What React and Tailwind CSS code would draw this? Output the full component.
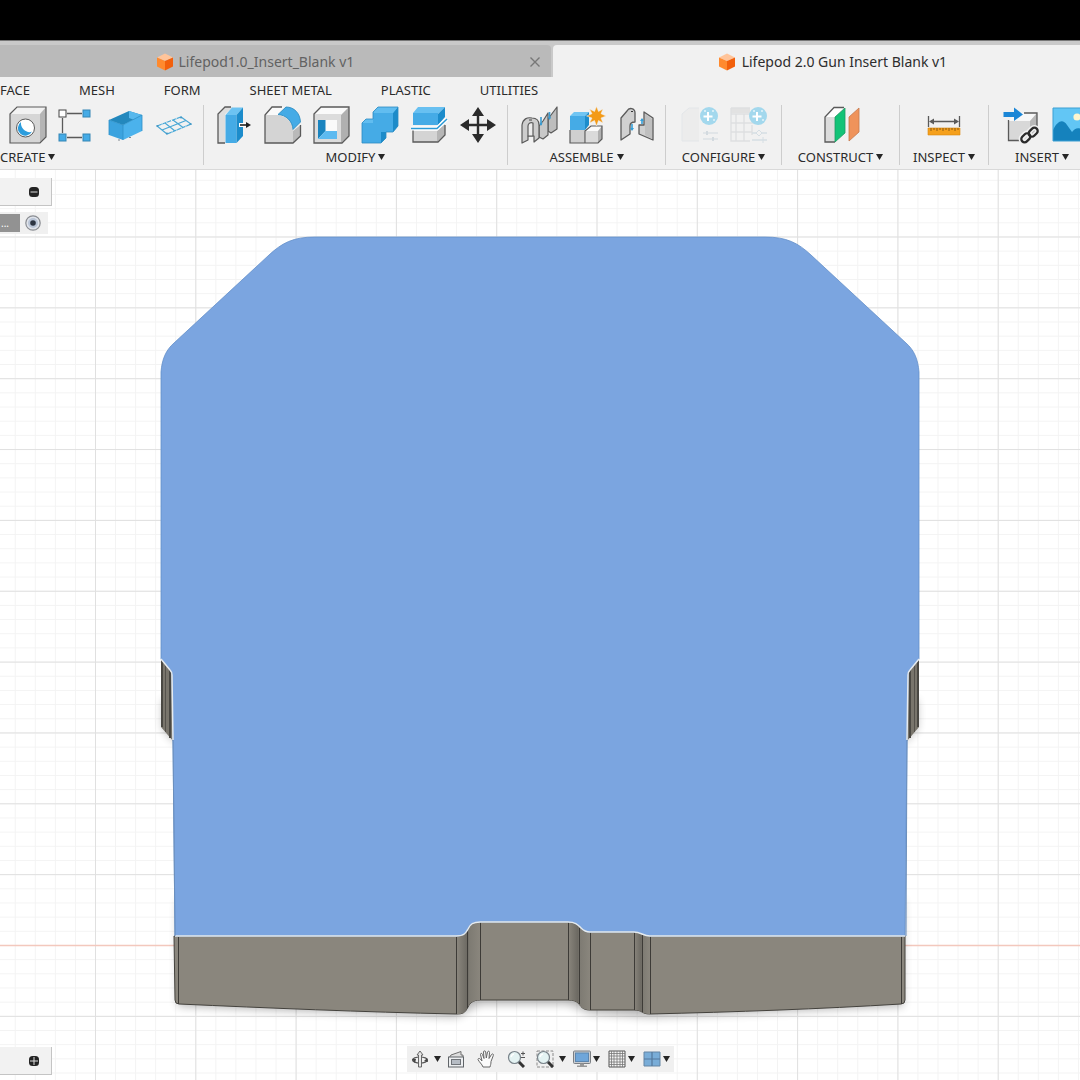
const BLUE = '#45abe6'
const DARK_BLUE = '#1c8ccb'
const LINE = '#5a5a5a'

function Icon({ children, className = 'h-10 w-10', box = '0 0 40 40' }) {
  return (
    <svg viewBox={box} className={`shrink-0 ${className}`} fill="none" aria-hidden="true">
      {children}
    </svg>
  )
}

function Caret() {
  return (
    <svg viewBox="0 0 7 6" className="h-1.5 w-[7px] shrink-0" aria-hidden="true">
      <path d="M0 0H7L3.5 6Z" fill="#262626" />
    </svg>
  )
}

function OrangeCube() {
  return (
    <Icon className="h-[18px] w-[18px]" box="0 0 18 18">
      <path d="M9 .5L17 4.5L9 8L1 4.5Z" fill="#ffc49a" />
      <path d="M1 4.5L9 8V17.500L1 13.500Z" fill="#ff8a2e" />
      <path d="M17 4.5L9 8V17.500L17 13.500Z" fill="#f2600c" />
    </Icon>
  )
}

function HoleIcon() {
  return (
    <Icon>
      <path d="M2 9L9 2H38L32 9Z" fill="#f2f2f2" />
      <path d="M2 9H32V38H2Z" fill="#d6d6d6" />
      <path d="M32 9L38 2V32L32 38Z" fill="#b5b5b5" />
      <path d="M2 9L9 2H38V32L32 38H2Z" stroke={LINE} strokeWidth="1.2" />
      <circle cx="17.500" cy="23" r="9" fill="#fff" stroke={LINE} />
      <path d="M13 17A7.500 7.500 0 1 0 24 26.500C20 29 12 24 13 17Z" fill="#2c9ddd" />
    </Icon>
  )
}

function SketchIcon() {
  return (
    <Icon>
      <path d="M10 8.500H25M10 32.500H25M5.500 13V28" stroke={LINE} strokeWidth="1.300" />
      <rect x="2" y="5" width="7" height="7" fill="#fff" stroke="#444" />
      <rect x="26" y="5" width="7" height="7" fill={BLUE} stroke="#3486b5" />
      <rect x="2" y="29" width="7" height="7" fill={BLUE} stroke="#3486b5" />
      <rect x="26" y="29" width="7" height="7" fill={BLUE} stroke="#3486b5" />
    </Icon>
  )
}

function BoxIcon() {
  return (
    <Icon>
      <path d="M3 15L23 6L36 10L17 20Z" fill="#2388bd" />
      <path d="M23 6V13L31 16L36 10Z" fill="#57b8ed" />
      <path d="M3 15L17 20V35L3 30Z" fill="#3ba3df" />
      <path d="M17 20L36 10V26L17 35Z" fill="#4bb2ec" />
      <path d="M3 15L17 20L36 10M17 20V35M3 15V30M36 10V26" stroke="#2d90c8" strokeWidth=".8" />
      <path d="M13 34.500V35.500M24 32V33" stroke="#123" />
    </Icon>
  )
}

function PatchIcon() {
  return (
    <Icon>
      <path d="M2 21L26 12L36 19L12 29ZM10 18L20 26M18 15L28 22.500M7 25L31 15.500" stroke="#4aa8d6" strokeWidth="1.200" />
      <path d="M2 21L26 12M12 29L36 19" stroke="#fff" strokeWidth="1" strokeDasharray="1 4" />
      <g fill="#3f95c4">
        <circle cx="2.500" cy="21" r="1" />
        <circle cx="26" cy="12.500" r="1" />
        <circle cx="35.500" cy="19" r="1" />
        <circle cx="12" cy="28.500" r="1" />
      </g>
    </Icon>
  )
}

function PressPullIcon() {
  return (
    <Icon>
      <path d="M12 38H5V9L12 2H20L12 9Z" fill="#dedede" />
      <path d="M12 38H5V9L12 2H18" stroke={LINE} strokeWidth="1.300" />
      <path d="M12.500 10L19 2.500H30L23.500 10Z" fill="#6cc3f2" />
      <path d="M12.500 10H23.500V38H12.500Z" fill={BLUE} />
      <path d="M23.500 10L30 2.500V31L23.500 38Z" fill={DARK_BLUE} />
      <path d="M26 20H33" stroke="#fff" strokeWidth="4" />
      <path d="M27 20H34" stroke="#222" strokeWidth="1.600" />
      <path d="M33 17L38 20L33 23Z" fill="#222" />
    </Icon>
  )
}

function FilletIcon() {
  return (
    <Icon>
      <path d="M3 10L10 2H22L16 10Z" fill="#fafafa" />
      <path d="M3 10H16Q29 12 31 25V38H3Z" fill="#d4d4d4" />
      <path d="M31 26L38.500 20V31L31 38Z" fill="#b9b9b9" />
      <path d="M20 2H10L3 10V38H31L38.500 31V20" stroke={LINE} strokeWidth="1.300" />
      <path d="M24 2C32 2 38 8 38.500 17L31 24.500C30.500 16 24 10 16 9.500Z" fill={BLUE} stroke="#2588be" strokeWidth=".8" />
    </Icon>
  )
}

function ShellIcon() {
  return (
    <Icon>
      <path d="M3 9L10 2H38L30 10Z" fill="#fafafa" />
      <path d="M3 9H30V38H3Z" fill="#dcdcdc" />
      <path d="M30 10L38 2V31L30 38Z" fill="#b0b0b0" />
      <path d="M3 9L10 2H38V31L31 38H3Z" stroke={LINE} strokeWidth="1.300" />
      <path d="M7 15H26V34H7Z" fill="#fafafa" />
      <path d="M7 15H14.500V26L7 34Z" fill="#1a84bf" />
      <path d="M14.500 26H26V34H7Z" fill="#5dbaf0" />
    </Icon>
  )
}

function CombineIcon() {
  return (
    <Icon>
      <path d="M2 18L6 14H13V7L18 2H38V21L33 27H26V33L21 38H2Z" fill={BLUE} />
      <path d="M38 2V21L33 27V8ZM26 27V33L21 38V27Z" fill="#1d8bc9" />
      <path d="M13 8L18 2H38L33 8ZM2 18L6 14H13V18Z" fill="#61bdf0" />
      <path d="M2 18L6 14H13V7L18 2H38V21L33 27H26V33L21 38H2Z" stroke="#2b8cc2" strokeWidth=".8" />
    </Icon>
  )
}

function SplitIcon() {
  return (
    <Icon>
      <path d="M4 26H28V37H4Z" fill="#d4d4d4" />
      <path d="M28 26L36 19V30L28 37Z" fill="#b6b6b6" />
      <path d="M4 25V37H29L36 30V20" stroke={LINE} strokeWidth="1.300" />
      <path d="M4 8L9 2H36L29 9Z" fill="#68c0f1" />
      <path d="M4 8H29V20H4Z" fill={BLUE} />
      <path d="M29 9L36 2V12L29 20Z" fill={DARK_BLUE} />
      <path d="M2 23.500H28L38 14" stroke="#fff" strokeWidth="4" />
      <path d="M2 23.500H28L38 14" stroke="#2b9ad6" strokeWidth="1.500" />
    </Icon>
  )
}

function MoveIcon() {
  return (
    <Icon>
      <path d="M20 6V34M6 20H34" stroke="#2b2b2b" strokeWidth="2.400" />
      <path d="M20 2L26 11H14ZM20 38L26 29H14ZM2 20L11 14V26ZM38 20L29 14V26Z" fill="#2b2b2b" />
    </Icon>
  )
}

function JointsIcon() {
  return (
    <Icon>
      <g stroke={LINE} strokeWidth="1.200" strokeLinejoin="round">
        <path d="M33 10L39 2V24L33 28L30 26V14Z" fill="#bdbdbd" />
        <path d="M25 16L30 8V30L25 34L21 32V21Z" fill="#c8c8c8" />
        <path d="M4 38V20C5 14 9 12 14 13C19 13 21 16 21 20V33L16 37V31H10V35Z" fill="#cdcdcd" />
        <path d="M10 31V21C10 18 13 17 15 18V31Z" fill="#ececec" />
      </g>
      <path d="M23 12V20M31.500 7V14" stroke="#3a9bd0" strokeWidth="1.600" />
      <path d="M21.500 18L23 21L24.500 18ZM30 12L31.500 15L33 12Z" fill="#3a9bd0" />
      <path d="M11 15H14" stroke="#444" />
    </Icon>
  )
}

function NewComponentIcon() {
  return (
    <Icon>
      <path d="M3 25H18V38H3Z" fill="#cfcfcf" />
      <path d="M19 26L23 21H35L31 26Z" fill="#fafafa" />
      <path d="M19 26H31V38H19Z" fill="#dadada" />
      <path d="M31 26L35 21V34L31 38Z" fill="#b0b0b0" />
      <path d="M3 25V38H31L35 34V21H24L18 26V38" stroke={LINE} strokeWidth="1.200" />
      <path d="M3 11L7 7H22L18 11Z" fill="#70c5f3" />
      <path d="M3 11H18V25H3Z" fill={BLUE} />
      <path d="M18 11L22 7V20L18 25Z" fill={DARK_BLUE} />
      <path
        d="M29.500 1.500L31.500 6.500L36 4L34 8.700L39 11L34 13L36 18L31.500 15.500L29.500 21L27.500 15.500L22.500 18L25 13L19.500 11L25 8.700L22.500 4L27.500 6.500Z"
        fill="#f39a17"
        stroke="#f1f1f1"
        strokeWidth=".5"
      />
    </Icon>
  )
}

function JointIcon() {
  return (
    <Icon>
      <g stroke={LINE} strokeWidth="1.300" strokeLinejoin="round" fill="#d0d0d0">
        <path d="M5 35V13L11 6C13 2 19 3 19 8V17C16 17 14 18 14 21V29Z" />
        <path d="M28 7L37 13V35L23 29V20H28Z" />
      </g>
      <path d="M29 9L36 14V34L29 30Z" fill="#bfbfbf" />
      <path d="M15 6.500H17" stroke="#333" />
      <path d="M16 19V25M26 14V19" stroke="#36a0d9" strokeWidth="1.600" />
      <path d="M14 23L16 26L18 23ZM24 16L26 13L28 16Z" fill="#36a0d9" />
    </Icon>
  )
}

function PlusBadge() {
  return (
    <>
      <circle cx="30" cy="11" r="9" fill="#a3d8ed" />
      <path d="M29 7V16M24.500 11.500H33.500" stroke="#fff" strokeWidth="2" />
      <path d="M25 6H27M33 6H35M34 15H36" stroke="#e3f3fa" strokeWidth="1.500" />
    </>
  )
}

function ConfigureIcon() {
  return (
    <Icon>
      <path d="M3 9L10 3H20V36H3Z" fill="#ececec" />
      <path d="M20 3H10L3 9V36H20" stroke="#e3e6e9" />
      <path d="M24 28H39M24 34H39" stroke="#dbe1e5" strokeWidth="1.500" />
      <path d="M28 26V30M34 32V36" stroke="#d3dadf" strokeWidth="2" />
      <PlusBadge />
    </Icon>
  )
}

function ConfigTableIcon() {
  return (
    <Icon>
      <path d="M3 3H22V8H3Z" fill="#e2e2e2" />
      <path d="M3 3V36H22M3 3H22M3 9H22M3 18H28M3 27H24M8 9V36M16 9V36M24 20V30" stroke="#dedfe1" strokeWidth="1.300" />
      <path d="M24 28H39M24 35H39" stroke="#d5dee4" strokeWidth="1.300" />
      <path d="M31 25L34 28L31 31L28 28ZM35 32V38" stroke="#d5dee4" fill="#f1f1f1" />
      <PlusBadge />
    </Icon>
  )
}

function PlaneIcon() {
  return (
    <Icon>
      <path d="M4 12L13 2.500H23L14 12Z" fill="#fff" />
      <path d="M4 12H14V37H4Z" fill="#dcdcdc" />
      <path d="M14 37H4V12L13 2.500H23" stroke={LINE} strokeWidth="1.300" />
      <path d="M14 12L24 3V28L14 37Z" fill="#12c377" stroke="#1d9a62" strokeWidth=".8" />
      <path d="M28 12L38 3V27L28 36Z" fill="#ef935b" stroke="#c6794c" strokeWidth=".8" />
    </Icon>
  )
}

function MeasureIcon() {
  return (
    <Icon>
      <path d="M4.500 11V22M35.500 11V22M7 16.500H33" stroke={LINE} strokeWidth="1.300" />
      <path d="M5 16.500L10 13.500V19.500ZM35 16.500L30 13.500V19.500Z" fill={LINE} />
      <path d="M4 23H36V30H4Z" fill="#f5a01c" stroke="#d8860d" strokeWidth=".6" />
      <path d="M7 23V26M10 23V25M13 23V26M16 23V25M19 23V26M22 23V25M25 23V26M28 23V25M31 23V26M34 23V25" stroke="#8c5a12" />
    </Icon>
  )
}

function InsertLinkIcon() {
  return (
    <Icon>
      <path d="M6.500 16L14 8H35L28 16Z" fill="#f7f7f7" />
      <path d="M6.500 16H28V35H6.500Z" fill="#d8d8d8" />
      <path d="M28 16L35 8V26L28 34Z" fill="#b8b8b8" />
      <path d="M20 35.500H6.500V15M22 8H35V24" stroke={LINE} strokeWidth="1.300" />
      <path d="M1.500 7H12V2.500L21 9.500L12 16V12H1.500Z" fill="#1b86d6" />
      <g stroke="#f1f1f1" strokeWidth="5.500">
        <rect x="19" y="29.500" width="10" height="6.500" rx="3.200" transform="rotate(-45 24 33)" />
        <rect x="26" y="24" width="10" height="6.500" rx="3.200" transform="rotate(-45 31 27)" />
      </g>
      <g stroke="#2b2b2b" strokeWidth="2.300">
        <rect x="19" y="29.500" width="10" height="6.500" rx="3.200" transform="rotate(-45 24 33)" />
        <rect x="26" y="24" width="10" height="6.500" rx="3.200" transform="rotate(-45 31 27)" />
      </g>
    </Icon>
  )
}

function PictureIcon() {
  return (
    <Icon>
      <path d="M2 3H38V36H2Z" fill="#62c6f5" />
      <circle cx="26" cy="12" r="3.600" fill="#fdf6cf" />
      <path d="M2 25C7 15 12 14 16 20L21 27C25 22 29 21 38 30V36H2Z" fill="#1582bd" />
      <path d="M2 3H38V36H2Z" stroke="#3b9fd3" />
    </Icon>
  )
}

const MENUS = ['FACE', 'MESH', 'FORM', 'SHEET METAL', 'PLASTIC', 'UTILITIES']

const GROUPS = [
  {
    label: 'CREATE',
    box: 'w-[204px] border-r',
    row: 'pl-[3px]',
    labelBox: 'self-start',
    tools: [['Hole', HoleIcon], ['Create sketch', SketchIcon], ['Box', BoxIcon], ['Patch', PatchIcon]],
  },
  {
    label: 'MODIFY',
    box: 'w-[304px] border-r',
    tools: [
      ['Press pull', PressPullIcon],
      ['Fillet', FilletIcon],
      ['Shell', ShellIcon],
      ['Combine', CombineIcon],
      ['Split body', SplitIcon],
      ['Move', MoveIcon],
    ],
  },
  {
    label: 'ASSEMBLE',
    box: 'w-[158px] border-r',
    tools: [['Joint origin', JointsIcon], ['New component', NewComponentIcon], ['Joint', JointIcon]],
  },
  { label: 'CONFIGURE', box: 'w-[116px] border-r', tools: [['Configure', ConfigureIcon], ['Configuration table', ConfigTableIcon]] },
  { label: 'CONSTRUCT', box: 'w-[118px] border-r', tools: [['Offset plane', PlaneIcon]] },
  { label: 'INSPECT', box: 'w-[89px] border-r', tools: [['Measure', MeasureIcon]] },
  { label: 'INSERT', box: 'w-[106px]', row: 'pl-2', tools: [['Insert derive', InsertLinkIcon], ['Canvas', PictureIcon]] },
]

function Tabs() {
  return (
    <div className="flex h-[37px] overflow-hidden border-t border-[#777] bg-[#c9c9c9] pt-1 text-sm">
      <div className="flex w-[51%] shrink-0 items-center rounded-tr bg-[#bababa] pt-0.5 pr-2 text-[#626262]">
        <button type="button" className="flex flex-1 items-center justify-center gap-1 pr-4">
          <OrangeCube />
          Lifepod1.0_Insert_Blank v1
        </button>
        <button type="button" aria-label="Close tab" className="p-0.5">
          <Icon className="h-3 w-3" box="0 0 12 12">
            <path d="M1.500 1.500L10.500 10.500M10.500 1.500L1.500 10.500" stroke="#777" strokeWidth="1.400" />
          </Icon>
        </button>
      </div>
      <button
        type="button"
        className="ml-0.5 flex flex-1 items-center justify-center gap-1.5 rounded-tl bg-[#f1f1f1] pt-0.5 pl-8 text-[#2d2d2d]"
      >
        <OrangeCube />
        Lifepod 2.0 Gun Insert Blank v1
      </button>
    </div>
  )
}

function Ribbon() {
  return (
    <div className="overflow-hidden border-b border-[#d9d9d9] bg-[#f1f1f1] text-[13px] leading-4 text-[#2b2b2b]">
      <nav className="flex h-6 items-center gap-[49px] pt-0.5">
        {MENUS.map((name) => (
          <button key={name} type="button" className="shrink-0 whitespace-nowrap">
            {name}
          </button>
        ))}
      </nav>
      <div className="flex h-17 pt-1 pb-1">
        {GROUPS.map(({ label, box, row = '', labelBox = '', tools }) => (
          <div key={label} className={`flex shrink-0 flex-col items-center border-[#cdcdcd] ${box}`}>
            <div className={`flex self-stretch ${row || 'justify-center'}`}>
              {tools.map(([name, Glyph]) => (
                <button key={name} type="button" aria-label={name} className="flex w-[49px] shrink-0 justify-center">
                  <Glyph />
                </button>
              ))}
            </div>
            <button type="button" className={`mt-1 flex items-center gap-[3px] ${labelBox}`}>
              {label}
              <Caret />
            </button>
          </div>
        ))}
      </div>
    </div>
  )
}

const TOP_EDGE =
  'H456C464 936 466 933 468 929C470 924 473 922 480 922H568C576 922 578 925 581 928C584 931 586 932 590 932H634C641 932 643 936 650 936H905'

function Model() {
  return (
    <svg viewBox="0 170 1080 910" preserveAspectRatio="xMidYMid slice" className="absolute inset-0 h-full w-full" fill="none" role="img" aria-label="Insert blank body">
      <defs>
        <pattern id="minor" x="95" y="236.500" width="20.060" height="14.170" patternUnits="userSpaceOnUse">
          <path d="M.5 0V14.170M0 .5H20.060" stroke="#f3f3f3" />
        </pattern>
        <pattern id="major" x="95" y="236.500" width="100.300" height="70.850" patternUnits="userSpaceOnUse">
          <path d="M.5 0V70.850M0 .5H100.300" stroke="#e0e0e0" />
        </pattern>
        <filter id="shadow" x="-10%" y="-10%" width="120%" height="120%">
          <feGaussianBlur stdDeviation="5" />
        </filter>
        <linearGradient id="bend">
          <stop offset="0" stopColor="#8a867d" />
          <stop offset=".45" stopColor="#6c6962" />
          <stop offset=".55" stopColor="#7e7b73" />
          <stop offset="1" stopColor="#8a867d" />
        </linearGradient>
      </defs>
      <rect x="-1000" y="-1000" width="3200" height="3200" fill="url(#minor)" />
      <rect x="-1000" y="-1000" width="3200" height="3200" fill="url(#major)" />
      <path d="M-1000 945.500H2200" stroke="#f3c8bd" strokeWidth="1.500" />

      <path d="M178 900V1006L456 1017L480 1004H568L590 1013L650 1017L903 1006V900ZM163 700V728L178 745V700ZM917 700V728L902 745V700Z" fill="#000" opacity=".3" filter="url(#shadow)" />

      {/* side tabs */}
      <path d="M161 655V727L173 741V668ZM919 655V727L907 741V668Z" fill="#79756c" />
      <path d="M162 660V727M170 668V738M918 660V727M910 668V738" stroke="#4a4843" strokeWidth="2" />
      <path d="M165.500 664V732M914.500 664V732" stroke="#55524c" />

      {/* front wall */}
      <path
        d={`M174 936${TOP_EDGE}V1000Q905 1004 901 1004C820 1009 735 1012 650 1014C641 1014 643 1010 634 1010H590C582 1010 581 1006 578 1003C576 1001 573 1000 568 1000H480C473 1000 470 1003 468 1007C465 1013 463 1014 456 1014C362 1012 268 1008 179 1004Q175 1004 175 1000Z`}
        fill="#8a867d"
        stroke="#44423d"
      />
      <path d="M457 937C465 936 466 933 468 929C470 924 473 922 480 922V1000C473 1000 470 1003 468 1007C465 1013 463 1014 457 1014Z" fill="url(#bend)" />
      <path d="M568 922C576 922 578 925 581 928C584 931 586 932 590 932V1010C582 1010 581 1006 578 1003C576 1001 573 1000 568 1000Z" fill="url(#bend)" />
      <path d="M634 932C641 932 643 936 650 936V1014C641 1014 643 1010 634 1010Z" fill="url(#bend)" />
      <path
        d="M178.500 937V1004M456.500 937V1014M467.500 931V1008M480.500 922V1000M568.500 922V1000M579.500 928V1004M590.500 932V1010M634.500 932V1010M642.500 934V1012M650.500 936V1014M901.500 937V1004"
        stroke="#3d3b37"
      />

      {/* selected top face */}
      <path
        d={`M175 936${TOP_EDGE}L907 740L908 675Q908 672 910 670L919 659V372C918 359 914 350 906 343L811 255C798 243 787 237 765 237H315C293 237 282 243 269 255L174 343C166 350 162 359 161 372V659L170 670Q172 672 172 675L173 740Z`}
        fill="#7ba5e0"
        stroke="#638fc9"
        strokeWidth=".8"
      />
      <path d={`M175 936${TOP_EDGE}M161 659L170 670Q172 672 172 675L173 740M919 659L910 670Q908 672 908 675L907 740`} stroke="#e6ebef" strokeWidth="1.500" />
      <path d="M173 740L175 936M907 740L906 936" stroke="#6b8fbd" />
    </svg>
  )
}

function BrowserPanel() {
  return (
    <div className="relative flex flex-col items-start gap-1.5 pt-2">
      <div className="flex h-7 w-[52px] items-center border-r border-b border-[#c4c4c4] bg-[#f2f2f2] pl-[29px]">
        <button type="button" aria-label="Collapse browser">
          <Icon className="h-2.5 w-2.5" box="0 0 10 10">
            <rect width="10" height="10" rx="3.500" fill="#242424" />
            <path d="M1.500 5H8.500" stroke="#ddd" />
          </Icon>
        </button>
      </div>
      <div className="flex h-[22px] w-12 items-center gap-[5px] bg-[#f0f0f0]">
        <span className="flex h-[18px] w-5 items-center bg-[#929292] pl-px text-[10px] text-white">...</span>
        <button type="button" aria-label="Activate component">
          <Icon className="h-4 w-4" box="0 0 16 16">
            <circle cx="8" cy="8" r="7.200" fill="#dfe3ea" stroke="#8a8d92" strokeWidth="1.200" />
            <circle cx="8" cy="8" r="5" fill="#b9c4d6" />
            <circle cx="8" cy="8" r="2.800" fill="#2c3442" />
          </Icon>
        </button>
      </div>
    </div>
  )
}

function CommentsPanel() {
  return (
    <div className="absolute bottom-[5px] left-0 flex h-7 w-[52px] items-center border-r border-b border-[#c4c4c4] bg-[#f2f2f2] pl-[29px]">
      <button type="button" aria-label="Expand comments">
        <Icon className="h-2.5 w-2.5" box="0 0 10 10">
          <rect width="10" height="10" rx="3.500" fill="#242424" />
          <path d="M1 5H9M5 1V9" stroke="#ddd" />
        </Icon>
      </button>
    </div>
  )
}

function Lens() {
  return (
    <>
      <path d="M11.500 11.500L17 17" stroke="#333" strokeWidth="3" />
      <circle cx="7.500" cy="7.500" r="6" fill="#e4f3f3" stroke="#79838a" strokeWidth="1.200" />
      <path d="M4 7Q4.500 4.500 7 4" stroke="#fff" strokeWidth="1.500" />
    </>
  )
}

function NavBar() {
  const small = 'h-[18px] w-[18px]'
  return (
    <div className="absolute inset-x-0 bottom-2 flex justify-center">
      <div className="flex h-[26px] w-[267px] items-center bg-[#f0f0f0] pl-1">
        <button type="button" aria-label="Orbit" className="flex w-9 items-center gap-[5px]">
          <Icon className={small} box="0 0 18 18">
            <ellipse cx="9" cy="10" rx="7.500" ry="3" stroke="#555" strokeWidth="1.200" />
            <path d="M7.500 17V5H6L9 1L12 5H10.500V17Z" fill="#e8e8e8" stroke="#666" />
            <path d="M1 9L4 13L5 9ZM13 11L17 12L16 8Z" fill="#444" />
          </Icon>
          <Caret />
        </button>
        <button type="button" aria-label="Look at" className="mr-3">
          <Icon className={small} box="0 0 18 18">
            <path d="M2 8L4 5L14 1.500V5H16V8" fill="#ddd" stroke="#707070" />
            <rect x="1.500" y="7" width="15" height="10" fill="#eceef0" stroke="#606468" />
            <rect x="4.500" y="9.500" width="9" height="5" fill="#b6bcc4" stroke="#707479" />
          </Icon>
        </button>
        <button type="button" aria-label="Pan" className="mr-3">
          <Icon className={small} box="0 0 18 18">
            <path
              d="M6 17C5 14 2 12 1 9.500C1 8 3 8 4 10L5 11L3.500 4.500C3.500 3 5 3 5.500 4.500L7 8.500L6.500 2C6.500.5 8.500.5 8.700 2L9.300 8L10.500 2C11 .7 12.700 1 12.500 2.500L12 8.500L14.500 4.500C15.500 3.300 16.800 4 16.300 5.500L14 11.500C14 14 13.500 15 13 17Z"
              fill="#fbfbfb"
              stroke="#666"
            />
          </Icon>
        </button>
        <button type="button" aria-label="Zoom" className="mr-[11px]">
          <Icon className={small} box="0 0 18 18">
            <Lens />
            <path d="M14 3.500H18M16 1.500V5.500M14 7.500H18" stroke="#555" />
          </Icon>
        </button>
        <button type="button" aria-label="Zoom window" className="flex w-[37px] items-center gap-[5px]">
          <Icon className={small} box="0 0 18 18">
            <path d="M1 1H17V17H1Z" stroke="#8a8a8a" strokeDasharray="3 1.500" />
            <Lens />
          </Icon>
          <Caret />
        </button>
        <button type="button" aria-label="Display settings" className="flex w-[35px] items-center gap-0.5">
          <Icon className={small} box="0 0 18 18">
            <rect x=".5" y="1" width="17" height="12.500" rx="1" fill="#c9ccd0" stroke="#7b7f84" />
            <rect x="2.500" y="3" width="13" height="8.500" fill="#6fa6da" stroke="#5d87b0" />
            <path d="M7 13.500H11V15.500H14V17H4V15.500H7Z" fill="#999" />
          </Icon>
          <Caret />
        </button>
        <button type="button" aria-label="Grid settings" className="flex w-[35px] items-center gap-0.5">
          <Icon className={small} box="0 0 18 18">
            <path d="M1 1H17V17H1Z" fill="#f4f4f4" stroke="#555" />
            <path d="M3.500 1V17M6 1V17M9 1V17M12 1V17M14.500 1V17M1 3.500H17M1 6H17M1 9H17M1 12H17M1 14.500H17" stroke="#777" strokeWidth=".8" />
          </Icon>
          <Caret />
        </button>
        <button type="button" aria-label="Viewports" className="flex items-center gap-0.5">
          <Icon className={small} box="0 0 18 18">
            <path d="M1 2H17V16H1Z" fill="#79add8" stroke="#6485a4" />
            <path d="M9 2V16M1 9H17" stroke="#54789c" strokeWidth="1.200" />
          </Icon>
          <Caret />
        </button>
      </div>
    </div>
  )
}

export default function App() {
  return (
    <div className="flex min-h-screen flex-col overflow-hidden bg-white font-['Noto_Sans','Open_Sans',sans-serif]">
      <div className="h-10 bg-black" />
      <Tabs />
      <Ribbon />
      <main className="relative flex-1 overflow-hidden">
        <Model />
        <BrowserPanel />
        <CommentsPanel />
        <NavBar />
      </main>
    </div>
  )
}
